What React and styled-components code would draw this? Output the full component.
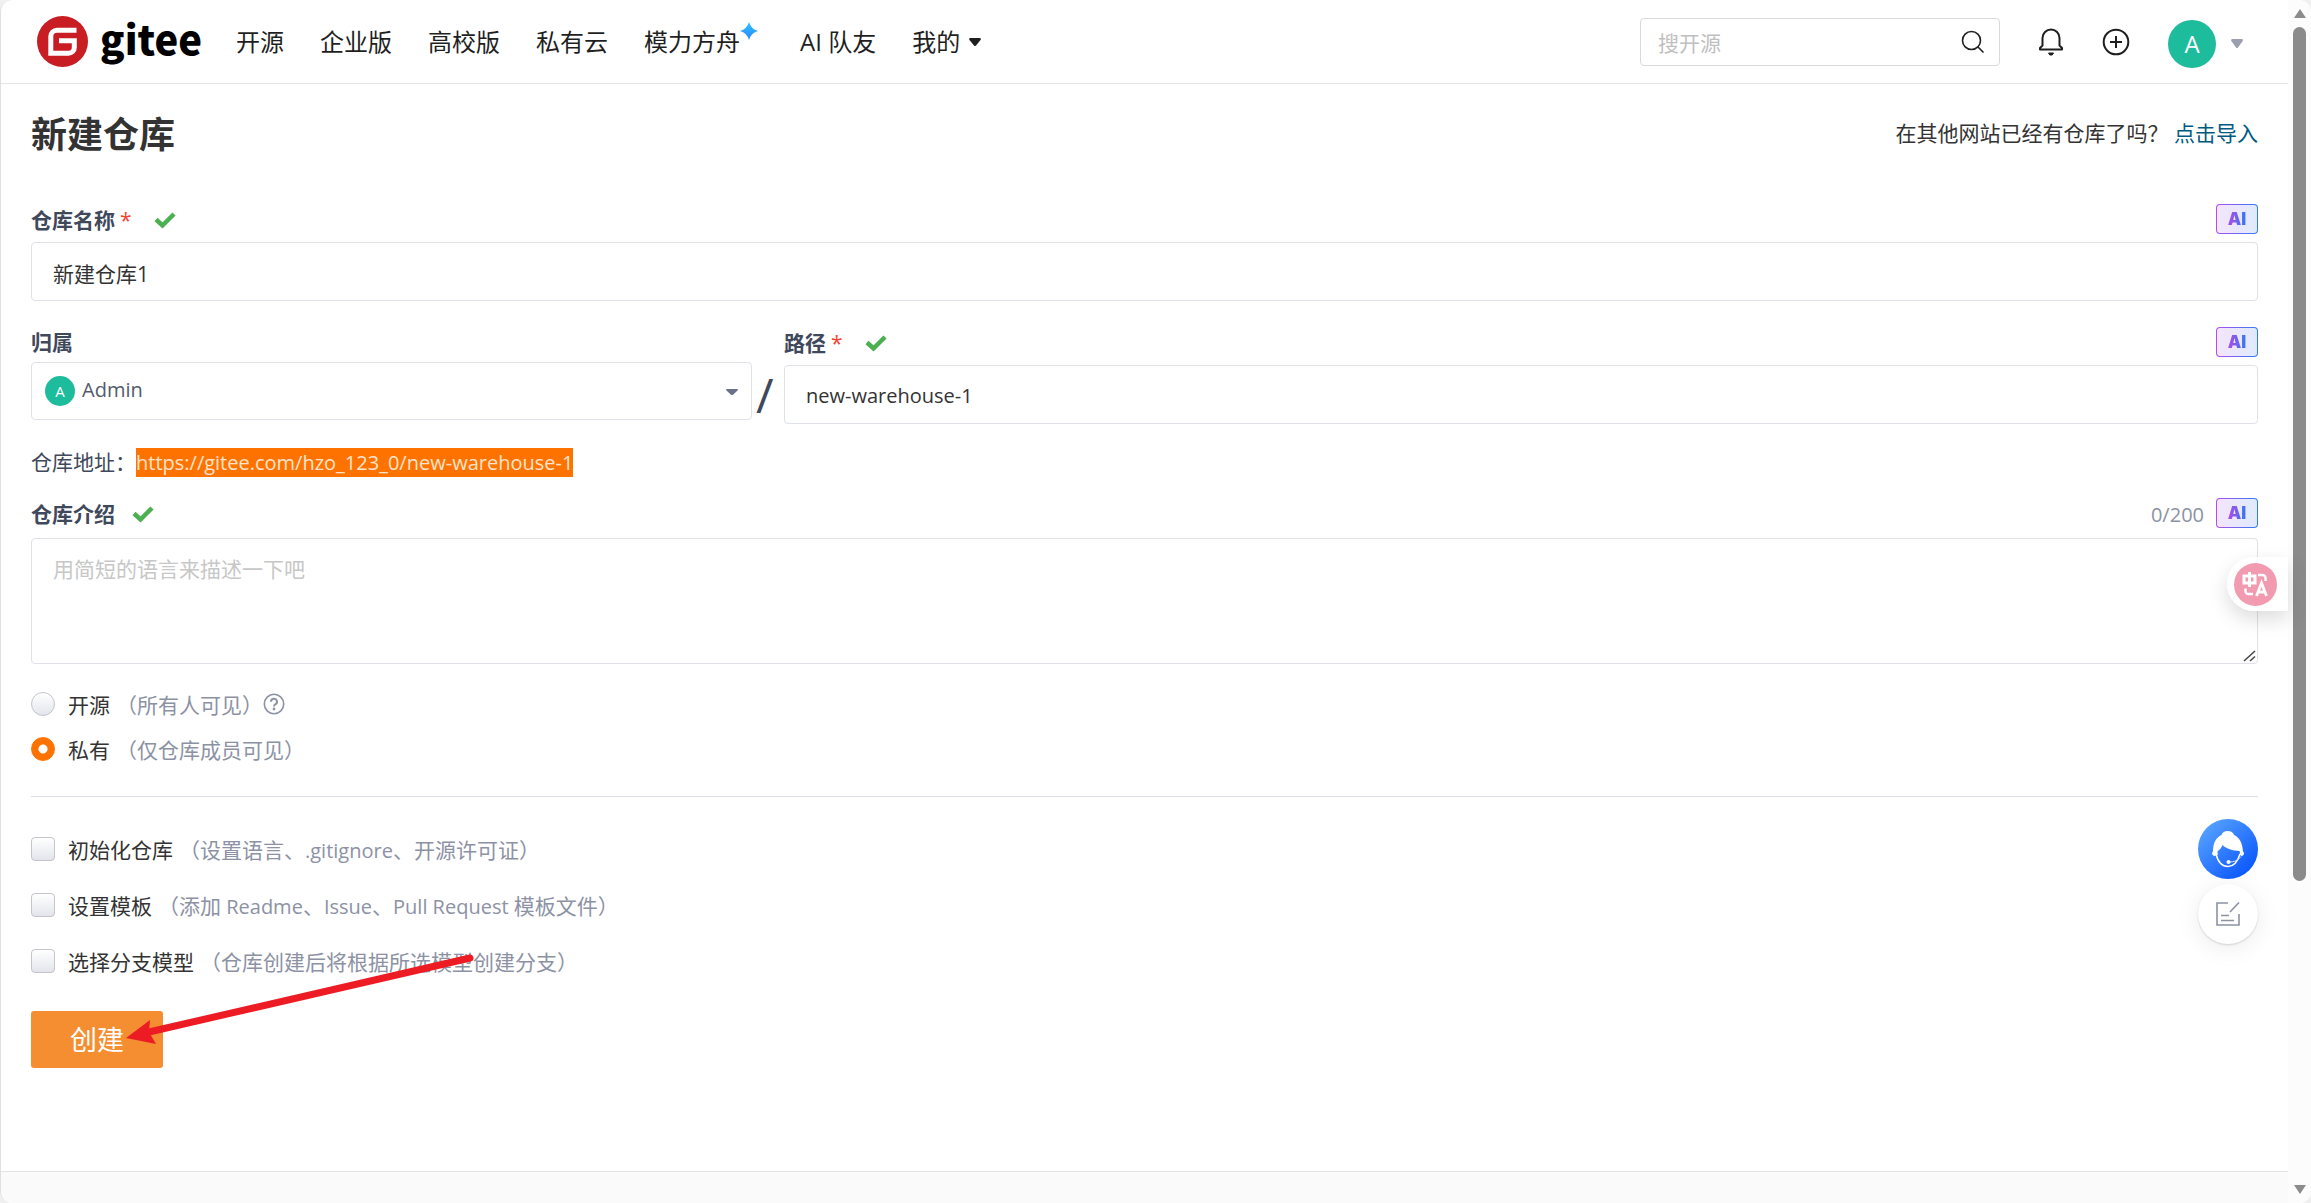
import React, { useState } from "react";
import styled, { createGlobalStyle, css } from "styled-components";

const VISIBILITY = [
  { value: "public", name: "开源", note: "（所有人可见）", help: true },
  { value: "private", name: "私有", note: "（仅仓库成员可见）" },
];

const OPTIONS = [
  {
    id: "init",
    name: "初始化仓库",
    note: (
      <>
        （设置语言、<small>.gitignore</small>、开源许可证）
      </>
    ),
  },
  {
    id: "template",
    name: "设置模板",
    note: (
      <>
        （添加<small> Readme</small>、<small>Issue</small>、<small>Pull Request </small>模板文件）
      </>
    ),
  },
  { id: "branch", name: "选择分支模型", note: "（仓库创建后将根据所选模型创建分支）" },
];

const Logo = () => (
  <svg width="51" height="51" viewBox="0 0 51 51" aria-hidden="true">
    <circle cx="25.5" cy="25.5" r="25.5" fill="#c71d23" />
    <path
      d="M39.5 14.2H20a6.200 6.200 0 0 0-6.200 6.200v16.900H31.500a5.800 5.800 0 0 0 5.800-5.800V24.700H22"
      fill="none"
      stroke="#fff"
      strokeWidth="5"
    />
  </svg>
);

const Spark = () => (
  <svg width="18" height="18" viewBox="0 0 18 18" aria-hidden="true">
    <defs>
      <linearGradient id="spark" x1="0" y1="0" x2="0" y2="1">
        <stop offset="0" stopColor="#2bc4ff" />
        <stop offset="1" stopColor="#2b84ff" />
      </linearGradient>
    </defs>
    <path d="M9 0Q11 7 18 9Q11 11 9 18Q7 11 0 9Q7 7 9 0Z" fill="url(#spark)" />
  </svg>
);

const Caret = ({ width = 12, height = 8, color = "#1f1f1f" }) => (
  <svg width={width} height={height} viewBox="0 0 12 8" preserveAspectRatio="none" aria-hidden="true">
    <path d="M1 0h10q1.500 0.500 0.500 2L7 7.500q-1 1-2 0L0.500 2Q-0.500 0.500 1 0Z" fill={color} />
  </svg>
);

const SearchIcon = () => (
  <svg width="24" height="24" viewBox="0 0 24 24" fill="none" stroke="#1f1f1f" strokeWidth="1.600" aria-hidden="true">
    <circle cx="10.500" cy="10.500" r="9" />
    <path d="M17 17l5.500 5.500" />
  </svg>
);

const BellIcon = () => (
  <svg width="26" height="28" viewBox="0 0 26 28" fill="none" stroke="#1f1f1f" strokeWidth="2" aria-hidden="true">
    <path d="M2 21.500h22v-1.500l-2.500-2.500V10a8.500 8.500 0 0 0-17 0v7.500L2 20z" strokeLinejoin="round" />
    <path d="M10.500 25h5l-1.300 2h-2.400z" fill="#1f1f1f" strokeWidth="1" />
  </svg>
);

const PlusIcon = () => (
  <svg width="28" height="28" viewBox="0 0 28 28" fill="none" stroke="#1f1f1f" strokeWidth="2" aria-hidden="true">
    <circle cx="14" cy="14" r="12.300" />
    <path d="M14 8v12M8 14h12" />
  </svg>
);

const CheckIcon = () => (
  <svg width="22" height="18" viewBox="0 0 22 18" aria-hidden="true">
    <path d="M2 8.500l6.500 6L20 3" fill="none" stroke="#4caf50" strokeWidth="4.500" />
  </svg>
);

const HelpIcon = () => (
  <svg width="22" height="22" viewBox="0 0 22 22" fill="none" stroke="#8c92a4" strokeWidth="1.600" aria-hidden="true">
    <circle cx="11" cy="11" r="9.700" />
    <path d="M8 8.800a3 3 0 1 1 4.300 2.600Q11 12.100 11 13.600" strokeWidth="2" />
    <circle cx="11" cy="16" r="0.600" />
  </svg>
);

const GripIcon = () => (
  <svg width="13" height="12" viewBox="0 0 13 12" stroke="#4a4a4a" strokeWidth="1.600" aria-hidden="true">
    <path d="M1 11L12 1M7 11l5-4.500" />
  </svg>
);

const TranslateIcon = () => (
  <svg width="43" height="43" viewBox="0 0 43 43" fill="none" stroke="#fff" aria-hidden="true">
    <circle cx="21.500" cy="21.500" r="21.500" fill="#f29ab0" stroke="none" />
    <path d="M10 13h11v7H10zM15.500 9v15" strokeWidth="3" />
    <path d="M24 12h4.500a3 3 0 0 1 3 3v3M11.500 25.500v2.500a3 3 0 0 0 3 3H19" strokeWidth="2.500" />
    <path d="M22.500 33l5-13 5 13M24.500 29h6.500" strokeWidth="2.800" />
  </svg>
);

const SupportIcon = () => (
  <svg width="60" height="60" viewBox="0 0 60 60" aria-hidden="true">
    <defs>
      <linearGradient id="support" x1="0.100" y1="0.100" x2="0.850" y2="0.900">
        <stop offset="0" stopColor="#56a2ff" />
        <stop offset="1" stopColor="#0b57ff" />
      </linearGradient>
    </defs>
    <circle cx="30" cy="30" r="30" fill="url(#support)" />
    <path
      d="M23.500 16c1-5.500 11.500-5.500 12.500 0 5.500 2.500 8.500 8 9 16.500 1.500 1 1.500 4-1.500 4.500l-2-1.500c0.500-1 0.500-2.500 0-3.500-7-0.500-13-2-17-6-1 3-3 4.500-5 6.500 0 1 0 2 0.500 3l-3.500 1.500c-2.500-0.500-3-3-1.500-4.500 0-8.500 3-14 8.500-16.500z"
      fill="#fff"
    />
    <path d="M18 35c2 8 6 12.500 12 12.500S39.500 43 42 35" fill="none" stroke="#fff" strokeWidth="1.500" />
    <path d="M43 37.500c-3 4-7 5.500-12 5.500" fill="none" stroke="#d5e4ff" strokeWidth="1" />
    <circle cx="30.500" cy="43" r="2" fill="#fff" />
  </svg>
);

const FeedbackIcon = () => (
  <svg width="24" height="24" viewBox="0 0 24 24" fill="none" stroke="#8c92a4" strokeWidth="1.600" aria-hidden="true">
    <path d="M12 1H1v22h22V12M14 10l9-9.500M5 13.500h8M5 18.500h13" />
  </svg>
);

const Arrow = () => (
  <svg width="350" height="92" viewBox="0 0 350 92" aria-hidden="true">
    <path d="M25 79L346 5" stroke="#ed1c24" strokeWidth="7" strokeLinecap="round" />
    <path d="M2 85L26 67L25 79L32 91Z" fill="#ed1c24" />
  </svg>
);

const AiBadge = ({ label }) => (
  <AiButton type="button" aria-label={label}>
    <span>AI</span>
  </AiButton>
);

const App = () => {
  const [name, setName] = useState("新建仓库1");
  const [path, setPath] = useState("new-warehouse-1");
  const [intro, setIntro] = useState("");
  const [visibility, setVisibility] = useState("private");

  return (
    <>
      <GlobalStyle />
      <Window>
        <Page>
          <Header>
            <Brand href="#">
              <Logo />
              <BrandName>gitee</BrandName>
            </Brand>
            <Nav>
              <NavLink href="#">开源</NavLink>
              <NavLink href="#">企业版</NavLink>
              <NavLink href="#">高校版</NavLink>
              <NavLink href="#">私有云</NavLink>
              <NavLink href="#" $spark>
                模力方舟
                <Spark />
              </NavLink>
              <NavLink href="#">AI 队友</NavLink>
              <NavLink href="#" $menu>
                我的
                <Caret />
              </NavLink>
            </Nav>
            <Search>
              <SearchInput type="search" placeholder="搜开源" aria-label="搜开源" />
              <IconButton type="button" aria-label="搜索">
                <SearchIcon />
              </IconButton>
            </Search>
            <Tools>
              <IconButton type="button" aria-label="通知">
                <BellIcon />
              </IconButton>
              <IconButton type="button" aria-label="新建">
                <PlusIcon />
              </IconButton>
              <UserMenu type="button" aria-label="用户菜单">
                <Avatar $size={48}>A</Avatar>
                <Caret width={12} height={9} color="#9a9fae" />
              </UserMenu>
            </Tools>
          </Header>

          <Main>
            <TitleRow>
              <Title>新建仓库</Title>
              <ImportHint>
                在其他网站已经有仓库了吗？ <a href="#">点击导入</a>
              </ImportHint>
            </TitleRow>

            <LabelRow>
              <Label htmlFor="name">
                仓库名称<Required>*</Required>
              </Label>
              <CheckIcon />
              <AiBadge label="AI 仓库名称" />
            </LabelRow>
            <TextInput id="name" value={name} onChange={(e) => setName(e.target.value)} />

            <PathRow>
              <div>
                <OwnerLabelRow>
                  <Label htmlFor="owner">归属</Label>
                </OwnerLabelRow>
                <SelectWrapper>
                  <Avatar $size={30}>A</Avatar>
                  <Select id="owner">
                    <option>Admin</option>
                  </Select>
                  <Caret width={12} height={6} color="#6b7287" />
                </SelectWrapper>
              </div>
              <Slash>/</Slash>
              <div>
                <LabelRow>
                  <Label htmlFor="path">
                    路径<Required>*</Required>
                  </Label>
                  <CheckIcon />
                  <AiBadge label="AI 路径" />
                </LabelRow>
                <TextInput id="path" $latin value={path} onChange={(e) => setPath(e.target.value)} />
              </div>
            </PathRow>

            <Address>
              仓库地址：<Url>https://gitee.com/hzo_123_0/{path}</Url>
            </Address>

            <LabelRow>
              <Label htmlFor="intro">仓库介绍</Label>
              <CheckIcon />
              <Counter>{intro.length}/200</Counter>
              <AiBadge label="AI 仓库介绍" />
            </LabelRow>
            <TextAreaWrapper>
              <TextArea
                id="intro"
                placeholder="用简短的语言来描述一下吧"
                value={intro}
                onChange={(e) => setIntro(e.target.value)}
              />
              <GripIcon />
            </TextAreaWrapper>

            <RadioList>
              {VISIBILITY.map(({ value, name, note, help }) => (
                <Choice key={value}>
                  <Radio
                    type="radio"
                    name="visibility"
                    value={value}
                    checked={visibility === value}
                    onChange={() => setVisibility(value)}
                  />
                  <ChoiceText>
                    {name}
                    <Note>{note}</Note>
                  </ChoiceText>
                  {help && <HelpIcon />}
                </Choice>
              ))}
            </RadioList>

            <Divider />

            <CheckList>
              {OPTIONS.map(({ id, name, note }) => (
                <Choice key={id}>
                  <Checkbox type="checkbox" name={id} />
                  <ChoiceText>
                    {name}
                    <Note>{note}</Note>
                  </ChoiceText>
                </Choice>
              ))}
            </CheckList>

            <SubmitRow>
              <SubmitButton type="button">创建</SubmitButton>
              <Pointer>
                <Arrow />
              </Pointer>
            </SubmitRow>
          </Main>

          <Footer />

          <TranslateTab type="button" aria-label="翻译">
            <TranslateIcon />
          </TranslateTab>
          <FloatingTools>
            <FloatingButton type="button" aria-label="客服">
              <SupportIcon />
            </FloatingButton>
            <FloatingButton type="button" aria-label="反馈" $raised>
              <FeedbackIcon />
            </FloatingButton>
          </FloatingTools>
        </Page>

        <ScrollTrack aria-hidden="true">
          <ScrollArrow $up />
          <ScrollRail>
            <ScrollThumb />
          </ScrollRail>
          <ScrollArrow />
        </ScrollTrack>
      </Window>
    </>
  );
};

export default App;

const GlobalStyle = createGlobalStyle`
  * {
    box-sizing: border-box;
  }

  body {
    margin: 0;
    background: #f0f0f0;
    color: #333;
    font-family: "Open Sans", "Noto Sans CJK SC", sans-serif;
    font-size: 21px;
    line-height: 29px;
  }

  button, input, select, textarea {
    font: inherit;
    color: inherit;
  }

  svg {
    display: block;
    flex: none;
  }
`;

const Window = styled.div`
  display: flex;
  min-height: 100vh;
  border: 1px solid #e0e0e3;
  border-width: 0 0 0 1px;
  border-radius: 12px;
  background: #fff;
  overflow: hidden;
`;

const Page = styled.div`
  position: relative;
  flex: 1;
  min-width: 0;
  display: flex;
  flex-direction: column;
`;

const Header = styled.header`
  display: flex;
  align-items: center;
  height: 84px;
  padding: 0 45px 0 36px;
  border-bottom: 1px solid #e5e5e5;
`;

const Brand = styled.a`
  display: flex;
  align-items: center;
  gap: 12px;
  color: #000;
  text-decoration: none;
`;

const BrandName = styled.span`
  font-family: "Noto Sans CJK SC", sans-serif;
  font-size: 40px;
  font-weight: 900;
  line-height: 52px;
  padding-bottom: 8px;
`;

const Nav = styled.nav`
  display: flex;
  gap: 36px;
  margin-left: 34px;
`;

const NavLink = styled.a`
  display: flex;
  align-items: center;
  color: #1f1f1f;
  font-size: 24px;
  line-height: 36px;
  text-decoration: none;
  white-space: nowrap;

  ${({ $menu }) => $menu && css`
    gap: 9px;
  `}

  ${({ $spark }) => $spark && css`
    margin-right: 6px;

    svg {
      align-self: flex-start;
      margin-top: -2px;
    }
  `}
`;

const Search = styled.form`
  display: flex;
  align-items: center;
  width: 360px;
  height: 48px;
  margin-left: auto;
  padding: 0 14px 0 17px;
  border: 1px solid #d9d9d9;
  border-radius: 4px;
`;

const SearchInput = styled.input`
  flex: 1;
  min-width: 0;
  padding: 3px 0 0;
  border: none;
  outline: none;
  background: none;

  &::placeholder {
    color: #bfbfbf;
  }
`;

const IconButton = styled.button`
  display: flex;
  padding: 0;
  border: none;
  background: none;
  cursor: pointer;
`;

const Tools = styled.div`
  display: flex;
  align-items: center;
  gap: 38px;
  margin-left: 38px;
`;

const UserMenu = styled(IconButton)`
  align-items: center;
  gap: 15px;
  padding-top: 4px;
`;

const Avatar = styled.span`
  display: flex;
  align-items: center;
  justify-content: center;
  flex: none;
  width: ${({ $size }) => $size}px;
  height: ${({ $size }) => $size}px;
  border-radius: 50%;
  background: #1dbc9c;
  color: #fff;
  font-size: ${({ $size }) => ($size > 40 ? 24 : 15)}px;
`;

const Main = styled.main`
  flex: 1;
  padding: 22px 30px 60px;
`;

const TitleRow = styled.div`
  display: flex;
  align-items: center;
  justify-content: space-between;
  margin-bottom: 44px;
`;

const Title = styled.h1`
  margin: 0;
  padding-top: 4px;
  font-size: 36px;
  font-weight: 600;
  line-height: 50px;
`;

const ImportHint = styled.div`
  a {
    color: #005980;
    text-decoration: none;
  }
`;

const LabelRow = styled.div`
  display: flex;
  align-items: center;
  height: 30px;
  margin-bottom: 8px;

  > svg {
    margin-top: 2px;
  }
`;

const OwnerLabelRow = styled(LabelRow)`
  height: 27px;
`;

const Label = styled.label`
  margin-right: 17px;
  padding-top: 3px;
  color: #40485b;
  font-weight: 700;
`;

const Required = styled.span`
  margin: 0 5px;
  color: #f44336;
  font-weight: 400;
`;

const AiButton = styled.button`
  display: flex;
  align-items: center;
  justify-content: center;
  width: 42px;
  height: 30px;
  margin-left: auto;
  padding: 0;
  border: 1px solid transparent;
  border-radius: 4px;
  background:
    linear-gradient(90deg, #f4e5fc, #dfeafe) padding-box,
    linear-gradient(90deg, #b44fe8, #2f7df6) border-box;
  cursor: pointer;

  span {
    background: linear-gradient(90deg, #b14be6, #3277f5);
    background-clip: text;
    color: transparent;
    font-family: Inter, sans-serif;
    font-size: 17px;
    font-weight: 900;
  }
`;

const fieldStyle = css`
  display: block;
  width: 100%;
  border: 1px solid #dfe1e8;
  border-radius: 4px;
  background: #fff;
  outline: none;
`;

const TextInput = styled.input`
  ${fieldStyle}
  height: 59px;
  padding: 2px 21px 0;
  font-size: ${({ $latin }) => ($latin ? 20 : 21)}px;
`;

const PathRow = styled.div`
  display: grid;
  grid-template-columns: minmax(0, 45fr) 32px minmax(0, 92fr);
  margin-top: 26px;
`;

const SelectWrapper = styled.div`
  position: relative;

  ${Avatar} {
    position: absolute;
    top: 14px;
    left: 14px;
  }

  svg {
    position: absolute;
    top: 27px;
    right: 14px;
  }
`;

const Select = styled.select`
  ${fieldStyle}
  height: 58px;
  padding: 0 40px 4px 50px;
  appearance: none;
  color: #535a6e;
  font-size: 20px;
`;

const Slash = styled.span`
  align-self: end;
  padding-left: 4px;
  color: #40485b;
  font-size: 48px;
  line-height: 59px;
`;

const Address = styled.div`
  margin: 24px 0 21px;
  color: #40485b;
`;

const Url = styled.span`
  display: inline-block;
  background: #fe7300;
  color: #ffe3cc;
  font-size: 20px;
`;

const Counter = styled.span`
  margin-left: auto;
  padding-top: 2px;
  color: #8c92a4;
  font-size: 20px;

  & + ${AiButton} {
    margin-left: 12px;
  }
`;

const TextAreaWrapper = styled.div`
  position: relative;
  margin-top: 10px;

  svg {
    position: absolute;
    right: 2px;
    bottom: 2px;
    pointer-events: none;
  }
`;

const TextArea = styled.textarea`
  ${fieldStyle}
  height: 126px;
  padding: 16px 21px;
  resize: vertical;

  &::placeholder {
    color: #c7c7c7;
  }

  &::-webkit-resizer {
    background: transparent;
  }
`;

const RadioList = styled.div`
  display: flex;
  flex-direction: column;
  align-items: flex-start;
  gap: 21px;
  margin-top: 28px;
`;

const CheckList = styled(RadioList)`
  gap: 32px;
  margin-top: 40px;
`;

const Choice = styled.label`
  display: flex;
  align-items: center;
  height: 24px;
  cursor: pointer;
`;

const ChoiceText = styled.span`
  padding-top: 2px;
  white-space: nowrap;
`;

const Note = styled.span`
  margin-left: 6px;
  color: #8c92a4;

  small {
    font-size: 20px;
  }
`;

const Checkbox = styled.input`
  appearance: none;
  flex: none;
  width: 24px;
  height: 24px;
  margin: 0 13px 0 0;
  border: 1px solid #c3c5cb;
  border-radius: 4px;
  background: linear-gradient(#fff, #e3e5ec);

  &:checked {
    border-color: #fe7300;
    background: #fe7300;
  }
`;

const Radio = styled(Checkbox)`
  border-radius: 50%;

  &:checked {
    background: radial-gradient(circle, #fff 4px, #fe7300 5px);
  }
`;

const Divider = styled.hr`
  margin: 35px 0 0;
  border: none;
  border-top: 1px solid #dce0e6;
`;

const SubmitRow = styled.div`
  position: relative;
  margin-top: 38px;
`;

const SubmitButton = styled.button`
  width: 132px;
  height: 57px;
  padding: 0;
  border: none;
  border-radius: 3px;
  background: #f58e30;
  color: #fff;
  font-size: 27px;
  cursor: pointer;
`;

const Pointer = styled.div`
  position: absolute;
  top: -58px;
  left: 93px;
  pointer-events: none;
`;

const Footer = styled.footer`
  height: 32px;
  border-top: 1px solid #e3e3e3;
  background: #fafafa;
`;

const TranslateTab = styled.button`
  position: absolute;
  top: 557px;
  right: 0;
  height: 54px;
  padding: 0 11px 0 7px;
  border: none;
  border-radius: 27px 0 0 27px;
  background: rgba(255, 255, 255, 0.9);
  box-shadow: 0 8px 20px rgba(0, 0, 0, 0.14);
  cursor: pointer;
`;

const FloatingTools = styled.div`
  position: absolute;
  top: 819px;
  right: 30px;
  display: flex;
  flex-direction: column;
  gap: 5px;
`;

const FloatingButton = styled.button`
  display: flex;
  align-items: center;
  justify-content: center;
  width: 60px;
  height: 60px;
  padding: 0;
  border: none;
  border-radius: 50%;
  background: #fff;
  box-shadow: ${({ $raised }) => ($raised ? "0 1px 2px rgba(0, 0, 0, 0.15), 0 4px 24px rgba(0, 0, 0, 0.08)" : "none")};
  cursor: pointer;
`;

const ScrollTrack = styled.div`
  display: flex;
  flex-direction: column;
  align-items: center;
  width: 23px;
  padding: 9px 0;
  background: #fcfcfc;
`;

const ScrollArrow = styled.div`
  border: 6px solid transparent;
  ${({ $up }) =>
    $up
      ? "border-top: none; border-bottom: 9px solid #8b8b8b;"
      : "border-bottom: none; border-top: 9px solid #8b8b8b;"}
`;

const ScrollRail = styled.div`
  flex: 1;
  width: 13px;
  margin: 9px 0;
`;

const ScrollThumb = styled.div`
  height: calc(74% + 4px);
  border-radius: 7px;
  background: #8b8b8b;
`;
